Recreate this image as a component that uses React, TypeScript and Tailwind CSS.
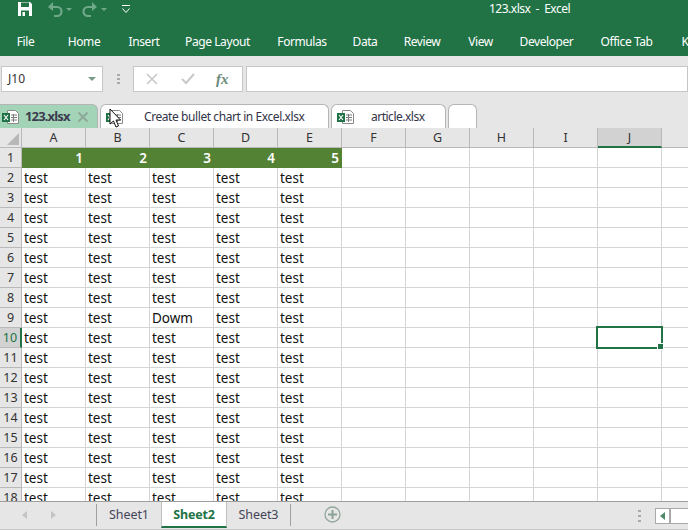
import React from 'react';

const menus = [
  { label: 'File', w: 'w-[51px]' },
  { label: 'Home', w: 'w-[66px]' },
  { label: 'Insert', w: 'w-[54px]' },
  { label: 'Page Layout', w: 'w-[93px]' },
  { label: 'Formulas', w: 'w-[76px]' },
  { label: 'Data', w: 'w-[50px]' },
  { label: 'Review', w: 'w-[64px]' },
  { label: 'View', w: 'w-[53px]' },
  { label: 'Developer', w: 'w-[79px]' },
  { label: 'Office Tab', w: 'w-[81px]' },
  { label: 'K', w: 'w-[36px]' },
];

const cols = ['A', 'B', 'C', 'D', 'E', 'F', 'G', 'H', 'I', 'J', ''];
const rows = Array.from({ length: 18 }, (_, i) => i + 1);

function XlIcon() {
  return (
    <svg width="18" height="16" viewBox="0 0 18 16" className="shrink-0">
      <path d="M5.5 1.5h8l3 3v10h-11z" fill="#fff" stroke="#8a8a8a" />
      <path d="M9 6h6M9 8.5h6M9 11h6M11.5 5v8" stroke="#7a7a7a" />
      <rect x="0" y="4" width="8" height="9" fill="#1e7145" />
      <path d="M2 6l4 5M6 6l-4 5" stroke="#fff" strokeWidth="1.2" />
    </svg>
  );
}

function Cell({ row, col }: { row: number; col: number }) {
  if (row === 1 && col < 5) {
    return (
      <div className="h-5 bg-[#548235] text-white text-right pr-[3px] text-[13.5px] leading-5 font-semibold">
        {col + 1}
      </div>
    );
  }
  let text = '';
  if (col < 5) text = row === 9 && col === 2 ? 'Dowm' : 'test';
  return (
    <div className="h-5 border-r border-b border-[#d4d4d4] pl-[2px] text-[13.5px] leading-[21px] text-[#111] overflow-hidden">
      {text}
    </div>
  );
}

export default function App() {
  return (
    <div className="relative w-[688px] h-[530px] overflow-hidden bg-[#e6e6e6] font-['Noto_Sans',sans-serif]">
      {/* title bar and ribbon menu */}
      <div className="relative h-14 bg-[#217346] text-white overflow-hidden">
        <div className="relative h-[26px] flex items-center">
          <svg width="16" height="16" viewBox="0 0 16 16" className="ml-[17px] mb-[9px]">
            <path d="M1 1h12l2 2v12H1z" fill="#fff" />
            <rect x="4" y="1.5" width="8" height="4.5" fill="#217346" />
            <rect x="4" y="9.5" width="8" height="5.5" fill="#217346" />
            <rect x="5.5" y="11" width="2.5" height="4" fill="#fff" />
          </svg>
          <svg width="26" height="16" viewBox="0 0 26 16" className="ml-[14px] mb-[9px]" fill="none">
            <path d="M4 6h6a4.500 4.500 0 0 1 0 9H7" stroke="#6fa98a" strokeWidth="2.200" />
            <path d="M1 6l5-5v9z" fill="#6fa98a" />
            <path d="M19 7h6l-3 3z" fill="#6fa98a" />
          </svg>
          <svg width="26" height="16" viewBox="0 0 26 16" className="ml-[9px] mb-[9px]" fill="none">
            <path d="M12 6H6a4.500 4.500 0 0 0 0 9h3" stroke="#6fa98a" strokeWidth="2.200" />
            <path d="M15 6l-5-5v9z" fill="#6fa98a" />
            <path d="M19 7h6l-3 3z" fill="#6fa98a" />
          </svg>
          <svg width="10" height="9" viewBox="0 0 10 9" className="ml-[13px] mb-[7px]" fill="none">
            <path d="M1 .5h8M1.500 3.500L5 7.500l3.500-4" stroke="#fff" />
          </svg>
          <div className="absolute left-[489px] top-[0px] text-[12px] leading-[18px] whitespace-nowrap tracking-[-0.5px]">123.xlsx&nbsp; -&nbsp; Excel</div>
        </div>
        <div className="flex items-center h-[30px] pt-[1px] text-[12px] whitespace-nowrap tracking-[-0.42px]">
          {menus.map((m) => (
            <div key={m.label} className={`${m.w} shrink-0 text-center`}>
              {m.label}
            </div>
          ))}
        </div>
      </div>

      {/* formula bar */}
      <div className="h-12 flex items-start pt-[10px] bg-[#e6e6e6]">
        <div className="ml-[1px] w-[102px] h-[26px] bg-white border border-[#c6c6c6] flex items-center justify-between pl-[6px] pr-[6px] text-[12px] text-[#333]">
          <span>J10</span>
          <span className="w-0 h-0 border-l-[4px] border-r-[4px] border-t-[4px] border-l-transparent border-r-transparent border-t-[#7a9a8a]" />
        </div>
        <div className="w-[30px] flex flex-col items-center justify-center gap-[2px] h-[26px]">
          <span className="w-[3px] h-[2px] bg-[#aaa]" />
          <span className="w-[3px] h-[2px] bg-[#aaa]" />
          <span className="w-[3px] h-[2px] bg-[#aaa]" />
        </div>
        <div className="w-[110px] h-[26px] bg-white border border-[#c6c6c6] flex items-center">
          <svg width="12" height="12" viewBox="0 0 12 12" className="ml-[12px]">
            <path d="M1 1l10 10M11 1L1 11" stroke="#c8c8c8" strokeWidth="1.6" />
          </svg>
          <svg width="14" height="12" viewBox="0 0 14 12" className="ml-[23px]">
            <path d="M1 6l4 4 8-9" fill="none" stroke="#c8c8c8" strokeWidth="2" />
          </svg>
          <span className="ml-[21px] text-[15px] italic font-bold text-[#6b8a7a] font-['Liberation_Serif',serif]">fx</span>
        </div>
        <div className="ml-[3px] flex-1 h-[26px] bg-white border border-[#c6c6c6]" />
      </div>

      {/* workbook tabs */}
      <div className="h-6 flex items-end">
        <div className="w-[98px] h-6 bg-[#a3d4b8] rounded-tr-md border-t border-r border-[#b5b5b5] flex items-center pl-[2px] text-[13px] font-bold text-[#3c3c50] tracking-[-0.85px]">
          <XlIcon />
          <span className="ml-[5px]">123.xlsx</span>
          <svg width="10" height="10" viewBox="0 0 10 10" className="ml-[8px]">
            <path d="M.5.5l9 9M9.500.5l-9 9" stroke="#8fa89a" strokeWidth="2" />
          </svg>
        </div>
        <div className="ml-[2px] w-[229px] h-6 bg-white rounded-t-md border-t border-x border-[#b5b5b5] flex items-center pl-[5px] text-[12px] text-[#333347] tracking-[-0.42px]">
          <XlIcon />
          <span className="ml-[20px] whitespace-nowrap">Create bullet chart in Excel.xlsx</span>
        </div>
        <div className="ml-[2px] w-[115px] h-6 bg-white rounded-t-md border-t border-x border-[#b5b5b5] flex items-center pl-[5px] text-[12px] text-[#333347] tracking-[-0.5px]">
          <XlIcon />
          <span className="ml-[16px]">article.xlsx</span>
        </div>
        <div className="ml-[2px] w-[29px] h-6 bg-white rounded-t-md border-t border-x border-[#b5b5b5]" />
      </div>

      {/* sheet */}
      <div className="relative h-[373px] overflow-hidden bg-white">
        <div className="grid grid-cols-[22px_repeat(11,64px)]">
          <div className="relative h-5 bg-[#e6e6e6] border-r border-b border-[#b9b9b9]">
            <svg width="12" height="12" viewBox="0 0 12 12" className="absolute right-[2px] bottom-[2px]">
              <path d="M12 0v12H0z" fill="#b8b8b8" />
            </svg>
          </div>
          {cols.map((c, i) => (
            <div
              key={i}
              className={
                c === 'J'
                  ? 'h-5 bg-[#d2d2d2] border-r border-b-2 border-r-[#b9b9b9] border-b-[#217346] text-center text-[12.5px] leading-[19px] text-[#333]'
                  : 'h-5 bg-[#e6e6e6] border-r border-b border-[#b9b9b9] text-center text-[12.5px] leading-[19px] text-[#333]'
              }
            >
              {c}
            </div>
          ))}
          {rows.map((r) => (
            <React.Fragment key={r}>
              <div
                className={
                  r === 10
                    ? 'h-5 bg-[#d2d2d2] border-r-2 border-b border-r-[#217346] border-b-[#b9b9b9] text-center text-[12.5px] leading-[20px] text-[#217346]'
                    : 'h-5 bg-[#e6e6e6] border-r border-b border-[#b9b9b9] text-center text-[12.5px] leading-[20px] text-[#333]'
                }
              >
                {r}
              </div>
              {cols.map((_, i) => (
                <Cell key={i} row={r} col={i} />
              ))}
            </React.Fragment>
          ))}
        </div>
        {/* selected cell */}
        <div className="absolute left-[596px] top-[198px] w-[67px] h-[23px] border-2 border-[#217346]">
          <span className="absolute right-[-3px] bottom-[-3px] w-[5px] h-[5px] bg-[#217346] border border-white box-content" />
        </div>
      </div>

      {/* sheet tabs */}
      <div className="h-[29px] border-t border-b border-t-[#9e9e9e] border-b-[#c8c8c8] flex items-start text-[12.5px] text-[#444458]">
        <div className="w-[96px] h-[26px] flex items-center shrink-0">
          <span className="ml-[22px] w-0 h-0 border-y-[4px] border-r-[5px] border-y-transparent border-r-[#c4c4c4]" />
          <span className="ml-[24px] w-0 h-0 border-y-[4px] border-l-[5px] border-y-transparent border-l-[#c4c4c4]" />
        </div>
        <div className="w-[65px] h-[22px] mt-[2px] border-l border-[#a0a0a0] text-center leading-[22px] tracking-[-0.1px]">Sheet1</div>
        <div className="w-[66px] h-[26px] bg-white border-x border-b-2 border-x-[#c0c0c0] border-b-[#217346] text-center leading-[26px] font-bold text-[#217346] tracking-[-0.2px]">Sheet2</div>
        <div className="w-[64px] h-[22px] mt-[2px] border-r border-[#a0a0a0] text-center leading-[22px] tracking-[-0.1px]">Sheet3</div>
        <svg width="17" height="17" viewBox="0 0 17 17" className="ml-[33px] mt-[4px] shrink-0">
          <circle cx="8.500" cy="8.500" r="7.500" fill="none" stroke="#93a89c" strokeWidth="1.300" />
          <path d="M8.500 4v9M4 8.500h9" stroke="#8aa396" strokeWidth="2" />
        </svg>
        <div className="ml-[297px] mt-[8px] flex flex-col gap-[3px] shrink-0">
          <span className="w-[3px] h-[2px] bg-[#aaa]" />
          <span className="w-[3px] h-[2px] bg-[#aaa]" />
          <span className="w-[3px] h-[2px] bg-[#aaa]" />
        </div>
        <div className="ml-[14px] mt-[6px] w-[15px] h-[16px] bg-white border border-[#aaa] flex items-center justify-center shrink-0">
          <span className="w-0 h-0 border-y-[4px] border-r-[5px] border-y-transparent border-r-[#4c8a6a]" />
        </div>
        <div className="mt-[6px] flex-1 h-[16px] bg-white border-y border-l border-[#aaa]" />
      </div>

      {/* mouse cursor */}
      <svg width="13" height="21" viewBox="0 0 13 21" className="absolute left-[109px] top-[108px]">
        <path d="M1 1v15l3.500-3 2.500 6 2.500-1-2.500-6h4.500z" fill="#fff" stroke="#111" strokeWidth="1" />
      </svg>
    </div>
  );
}
